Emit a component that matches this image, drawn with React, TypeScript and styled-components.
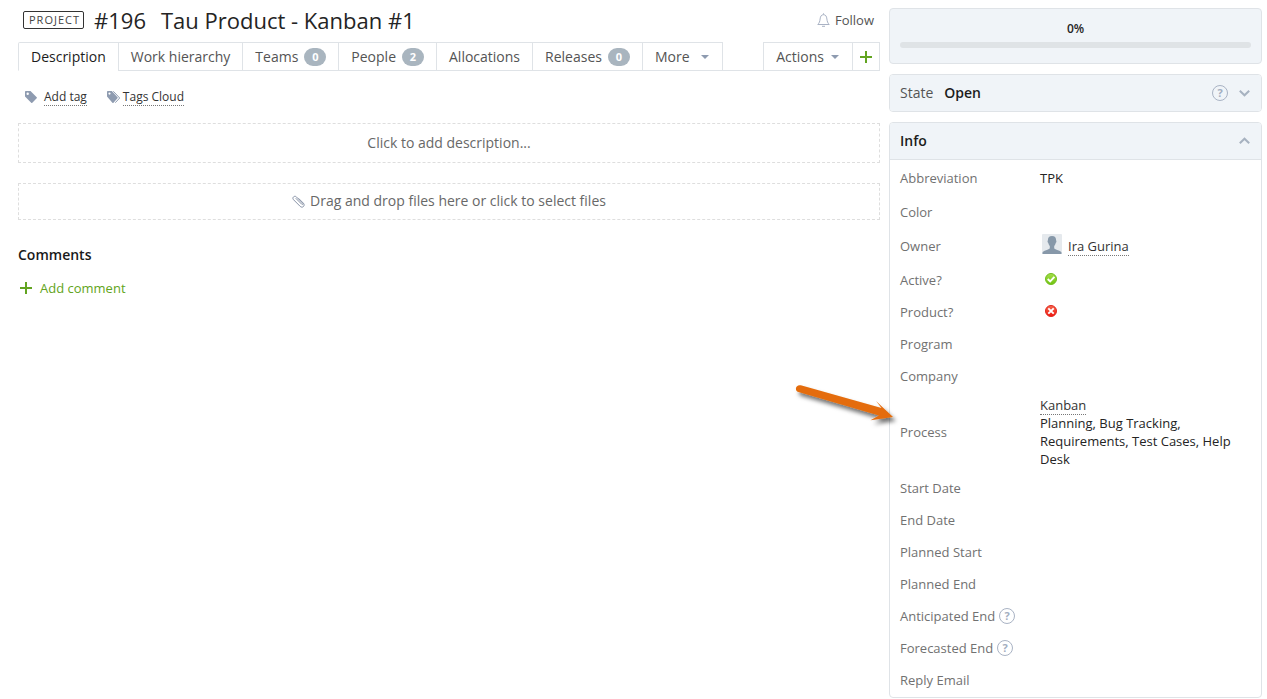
import React from 'react';
import styled, { createGlobalStyle, css } from 'styled-components';

const color = {
  border: '#dfe3e7',
  panel: '#f0f4f8',
  text: '#242424',
  tab: '#545454',
  label: '#717171',
  icon: '#8e9bb0',
  badge: '#a9b5bf',
  green: '#62a420',
};

const GlobalStyle = createGlobalStyle`
  *, *::before, *::after { box-sizing: border-box; }
  body {
    margin: 0;
    background: #fff;
    color: ${color.text};
    font: 13px/18px 'Open Sans', 'Noto Sans', sans-serif;
  }
  button {
    margin: 0;
    padding: 0;
    border: 0;
    background: none;
    color: inherit;
    font: inherit;
    cursor: pointer;
  }
  svg { display: block; flex: none; }
`;

const Page = styled.div`
  display: grid;
  grid-template-columns: minmax(0, 1fr) 373px;
  gap: 9px;
  padding: 0 5px 0 18px;
`;

const Main = styled.main`
  min-width: 0;
`;

const Header = styled.header`
  display: flex;
  align-items: center;
  height: 42px;
  padding: 0 6px 2px 5px;
`;

const EntityType = styled.span`
  height: 18px;
  margin-right: 10px;
  padding: 0 3px 0 5px;
  border: 1px solid #333;
  border-radius: 2px;
  color: #444;
  font-size: 11px;
  line-height: 16px;
  letter-spacing: 1px;
`;

const Title = styled.h1`
  display: flex;
  flex: 1;
  gap: 15px;
  margin: 0;
  font-size: 22px;
  font-weight: 400;
  line-height: 30px;
`;

const FollowButton = styled.button`
  display: flex;
  align-items: center;
  gap: 5px;
  color: ${color.tab};
`;

const TabBar = styled.nav`
  display: flex;
  height: 29px;
  font-size: 14px;
  color: ${color.tab};
`;

const Tab = styled.button<{ $active?: boolean }>`
  display: flex;
  align-items: center;
  gap: 6px;
  padding: 0 12px;
  border: 1px solid ${color.border};
  white-space: nowrap;
  & + & { margin-left: -1px; }
  &:first-child { border-top-left-radius: 2px; }
  ${({ $active }) => $active && css`
    border-bottom-color: transparent;
    color: #1c1c1c;
  `}
`;

const MoreTab = styled(Tab)`
  gap: 11px;
  padding-right: 13px;
`;

const ActionsTab = styled(Tab)`
  gap: 7px;
  padding-right: 13px;
`;

const AddTab = styled(Tab)`
  justify-content: center;
  width: 28px;
  padding: 0;
`;

const TabSpacer = styled.span`
  flex: 1;
  border-bottom: 1px solid ${color.border};
`;

const Badge = styled.span`
  width: 22px;
  height: 18px;
  border-radius: 9px;
  background: ${color.badge};
  color: #fff;
  font-size: 11px;
  font-weight: 700;
  line-height: 18px;
  text-align: center;
`;

const Caret = styled.span`
  border: 4px solid transparent;
  border-top-color: ${color.icon};
  border-bottom: 0;
`;

const TagRow = styled.div`
  display: flex;
  gap: 20px;
  padding: 18px 7px;
`;

const TagItem = styled.div<{ $gap: number }>`
  display: flex;
  align-items: center;
  gap: ${({ $gap }) => $gap}px;
  height: 16px;
  font-size: 12px;
`;

const DottedLink = styled.a`
  border-bottom: 1px dotted #777;
  color: #333;
  line-height: 17px;
  text-decoration: none;
`;

const DropBox = styled.button<{ $height: number }>`
  display: flex;
  align-items: center;
  justify-content: center;
  gap: 5px;
  width: 100%;
  height: ${({ $height }) => $height}px;
  margin-bottom: 20px;
  padding-bottom: 1px;
  border: 1px dashed #dedede;
  color: #686868;
  font-size: 14px;
`;

const SectionTitle = styled.h2`
  margin: 26px 0 15px;
  color: #1a1a1a;
  font-size: 14px;
  font-weight: 600;
  line-height: 18px;
`;

const AddComment = styled.button`
  display: flex;
  align-items: center;
  gap: 8px;
  padding-left: 2px;
  color: ${color.green};
`;

const Sidebar = styled.aside`
  display: flex;
  flex-direction: column;
  gap: 10px;
  padding-top: 8px;
`;

const Panel = styled.section`
  border: 1px solid ${color.border};
  border-radius: 4px;
`;

const ProgressPanel = styled(Panel)`
  height: 56px;
  padding: 11px 10px;
  background: ${color.panel};
  font-size: 12px;
  font-weight: 600;
  text-align: center;
`;

const Track = styled.div`
  height: 6px;
  margin-top: 4px;
  border-radius: 3px;
  background: #dfe3e6;
`;

const PanelHeader = styled.div<{ $open?: boolean }>`
  display: flex;
  align-items: center;
  gap: 11px;
  height: ${({ $open }) => ($open ? 37 : 36)}px;
  padding: 0 11px 0 10px;
  border-bottom: ${({ $open }) => ($open ? `1px solid ${color.border}` : '0')};
  border-radius: ${({ $open }) => ($open ? '3px 3px 0 0' : '3px')};
  background: ${color.panel};
  color: ${color.tab};
  font-size: 14px;
`;

const PanelTitle = styled.h2`
  flex: 1;
  margin: 0;
  color: #1c1c1c;
  font-size: 14px;
  font-weight: 600;
  line-height: 18px;
`;

const Help = styled.button`
  display: inline-flex;
  align-items: center;
  justify-content: center;
  flex: none;
  width: 16px;
  height: 16px;
  border: 1px solid #a9b3c4;
  border-radius: 50%;
  color: #a3aec0;
  font-size: 11px;
  font-weight: 700;
  line-height: 14px;
`;

const Fields = styled.table`
  width: 100%;
  padding: 1px 0;
  border-spacing: 0;
`;

const Row = styled.tr<{ $height?: number }>`
  height: ${({ $height }) => $height ?? 32}px;
`;

const Label = styled.th`
  position: relative;
  width: 150px;
  padding: 0 0 0 10px;
  color: ${color.label};
  font-weight: 400;
  text-align: left;
`;

const LabelContent = styled.span`
  display: flex;
  align-items: center;
  gap: 4px;
`;

const Value = styled.td`
  padding: 0 24px 0 0;
`;

const Owner = styled.span`
  display: flex;
  align-items: flex-start;
  gap: 6px;
  padding: 0 0 2px 2px;
  ${DottedLink} { margin-top: 4px; }
`;

const Flag = styled.span`
  display: block;
  padding: 0 0 2px 5px;
`;

const Pointer = styled.svg`
  position: absolute;
  top: -11px;
  left: -98px;
  z-index: 1;
  pointer-events: none;
`;

const Plus = () => (
  <svg width="12" height="12" viewBox="0 0 12 12" fill={color.green} aria-hidden="true">
    <path d="M5 0h2v5h5v2H7v5H5V7H0V5h5z" />
  </svg>
);

const Bell = () => (
  <svg width="13" height="14" viewBox="0 0 13 14" fill="none" stroke="#a9b2c4" aria-hidden="true">
    <path d="M6.500 .3v1.200M.8 11.500h11.400C10.600 9.800 10.200 8.500 9.900 6 9.600 3.200 8.600 1.700 6.500 1.700S3.400 3.200 3.100 6C2.800 8.500 2.400 9.800.8 11.500z" />
    <path d="M5 13.300h3" />
  </svg>
);

const Tag = () => (
  <svg width="12" height="12" viewBox="0 0 12 12" fill={color.icon} aria-hidden="true">
    <path fillRule="evenodd" d="M.8 0h4.700l6.200 6.200a.8.8 0 0 1 0 1.100l-4.400 4.400a.8.8 0 0 1-1.100 0L0 5.500V.8C0 .3.300 0 .8 0zM2.700 1.500a1.200 1.200 0 1 0 0 2.400 1.200 1.200 0 0 0 0-2.400z" />
  </svg>
);

const Tags = () => (
  <svg width="14" height="12" viewBox="0 0 14 12" fill={color.icon} aria-hidden="true">
    <path fillRule="evenodd" d="M.8 0h4l5.700 6.200a.8.8 0 0 1 0 1.100l-4 4.400a.8.8 0 0 1-1.100 0L0 5.500V.8C0 .3.300 0 .8 0zM2.500 1.500a1.100 1.100 0 1 0 0 2.200 1.100 1.100 0 0 0 0-2.200z" />
    <path d="M6.300.3 12.700 7l-4.400 4.700" fill="none" stroke={color.icon} />
  </svg>
);

const Clip = () => (
  <svg width="13" height="13" viewBox="0 0 13 13" fill="none" stroke="#8994a8" strokeLinecap="round" aria-hidden="true">
    <path d="M4 3.500l5.700 5.700c.8.800 1.800-.2 1-1L4.400 1.900C2.500.1-.4 2.700 1.500 4.700l6.700 6.700c2.400 2.200 5.300-.8 3.200-3.200L6.800 3.600" />
  </svg>
);

const Chevron = ({ up }: { up?: boolean }) => (
  <svg width="11" height="8" viewBox="0 0 11 8" fill="none" stroke="#a7b2c0" strokeWidth="2" aria-hidden="true">
    <path d={up ? 'M.8 6.300l4.700-4.600 4.700 4.600' : 'M.8 1.700l4.700 4.600 4.700-4.600'} />
  </svg>
);

const Avatar = () => (
  <svg width="20" height="20" viewBox="0 0 20 20" role="img" aria-label="Ira Gurina">
    <rect width="20" height="20" rx="1" fill="#e5e9ed" />
    <path fill="#8798a9" d="M10 2c2.700 0 4.200 1.600 4.100 4.200 0 .5.500.6.300 1.500-.1.700-.5.900-.7 1.200-.3 1.500-.9 2.300-1.500 3v2c.2 1 1.200 1.300 3 2 2 .8 3.800 1.200 4.300 2.600V20H.5v-1.500c.5-1.400 2.300-1.800 4.300-2.600 1.800-.7 2.800-1 3-2v-2c-.6-.7-1.200-1.500-1.500-3-.2-.3-.6-.5-.7-1.200-.2-.9.300-1 .3-1.500C5.800 3.600 7.300 2 10 2z" />
  </svg>
);

const StatusIcon = ({ on }: { on: boolean }) => (
  <svg width="12" height="12" viewBox="0 0 12 12" role="img" aria-label={on ? 'Yes' : 'No'}>
    <defs>
      <linearGradient id={on ? 'yes' : 'no'} x2="0" y2="1">
        <stop stopColor={on ? '#a5de4b' : '#f5694f'} />
        <stop offset="1" stopColor={on ? '#70c40f' : '#f0160f'} />
      </linearGradient>
    </defs>
    <circle cx="6" cy="6" r="5.500" fill={`url(#${on ? 'yes' : 'no'})`} stroke={on ? '#72bd20' : '#e0281e'} />
    <path d={on ? 'M2.700 6l2.500 2.500L9.400 3.900' : 'M3.300 3.300l5.400 5.400M8.700 3.300L3.300 8.700'} fill="none" stroke="#fff" strokeWidth="1.900" />
  </svg>
);

const Arrow = () => (
  <Pointer width="116" height="54" viewBox="0 0 116 54" aria-hidden="true">
    <defs>
      <filter id="arrow-shadow" x="-10%" y="-20%" width="125%" height="160%">
        <feDropShadow dx="3" dy="4" stdDeviation="2" floodColor="#000" floodOpacity="0.55" />
      </filter>
    </defs>
    <path
      filter="url(#arrow-shadow)"
      fill="#e46c0a"
      d="M8.800 4.300 89.500 27 84 20 101 36 78.500 39.300 87 34.500 6.500 11C2 9.500 3.800 3 8.800 4.300z"
    />
  </Pointer>
);

type TabInfo = { name: string; count?: number; active?: boolean };

const tabs: TabInfo[] = [
  { name: 'Description', active: true },
  { name: 'Work hierarchy' },
  { name: 'Teams', count: 0 },
  { name: 'People', count: 2 },
  { name: 'Allocations' },
  { name: 'Releases', count: 0 },
];

type Field = {
  label: string;
  height?: number;
  help?: boolean;
  pointed?: boolean;
  value?: React.ReactNode;
};

const fields: Field[] = [
  { label: 'Abbreviation', height: 34, value: 'TPK' },
  { label: 'Color', height: 34 },
  {
    label: 'Owner',
    height: 34,
    value: (
      <Owner>
        <Avatar />
        <DottedLink href="#owner">Ira Gurina</DottedLink>
      </Owner>
    ),
  },
  { label: 'Active?', height: 33, value: <Flag><StatusIcon on /></Flag> },
  { label: 'Product?', value: <Flag><StatusIcon on={false} /></Flag> },
  { label: 'Program' },
  { label: 'Company' },
  {
    label: 'Process',
    height: 80,
    pointed: true,
    value: (
      <>
        <DottedLink href="#process">Kanban</DottedLink>
        <div>Planning, Bug Tracking, Requirements, Test Cases, Help Desk</div>
      </>
    ),
  },
  { label: 'Start Date' },
  { label: 'End Date' },
  { label: 'Planned Start' },
  { label: 'Planned End' },
  { label: 'Anticipated End', help: true },
  { label: 'Forecasted End', help: true },
  { label: 'Reply Email' },
];

export default function App() {
  return (
    <>
      <GlobalStyle />
      <Page>
        <Main>
          <Header>
            <EntityType>PROJECT</EntityType>
            <Title>
              <span>#196</span>
              <span>Tau Product - Kanban #1</span>
            </Title>
            <FollowButton>
              <Bell />
              Follow
            </FollowButton>
          </Header>
          <TabBar>
            {tabs.map((tab) => (
              <Tab key={tab.name} $active={tab.active}>
                {tab.name}
                {tab.count !== undefined && <Badge>{tab.count}</Badge>}
              </Tab>
            ))}
            <MoreTab>
              More
              <Caret />
            </MoreTab>
            <TabSpacer />
            <ActionsTab>
              Actions
              <Caret />
            </ActionsTab>
            <AddTab aria-label="Add">
              <Plus />
            </AddTab>
          </TabBar>
          <TagRow>
            <TagItem $gap={7}>
              <Tag />
              <DottedLink href="#add-tag">Add tag</DottedLink>
            </TagItem>
            <TagItem $gap={2}>
              <Tags />
              <DottedLink href="#tags">Tags Cloud</DottedLink>
            </TagItem>
          </TagRow>
          <DropBox $height={40}>Click to add description...</DropBox>
          <DropBox $height={37}>
            <Clip />
            Drag and drop files here or click to select files
          </DropBox>
          <SectionTitle>Comments</SectionTitle>
          <AddComment>
            <Plus />
            Add comment
          </AddComment>
        </Main>
        <Sidebar>
          <ProgressPanel>
            0%
            <Track role="progressbar" aria-label="Progress" aria-valuenow={0} />
          </ProgressPanel>
          <Panel>
            <PanelHeader>
              State
              <PanelTitle>Open</PanelTitle>
              <Help aria-label="About state">?</Help>
              <button aria-label="Expand state">
                <Chevron />
              </button>
            </PanelHeader>
          </Panel>
          <Panel>
            <PanelHeader $open>
              <PanelTitle>Info</PanelTitle>
              <button aria-label="Collapse info">
                <Chevron up />
              </button>
            </PanelHeader>
            <Fields>
              <tbody>
                {fields.map((field) => (
                  <Row key={field.label} $height={field.height}>
                    <Label scope="row">
                      {field.pointed && <Arrow />}
                      <LabelContent>
                        {field.label}
                        {field.help && <Help aria-label={`About ${field.label}`}>?</Help>}
                      </LabelContent>
                    </Label>
                    <Value>{field.value}</Value>
                  </Row>
                ))}
              </tbody>
            </Fields>
          </Panel>
        </Sidebar>
      </Page>
    </>
  );
}
